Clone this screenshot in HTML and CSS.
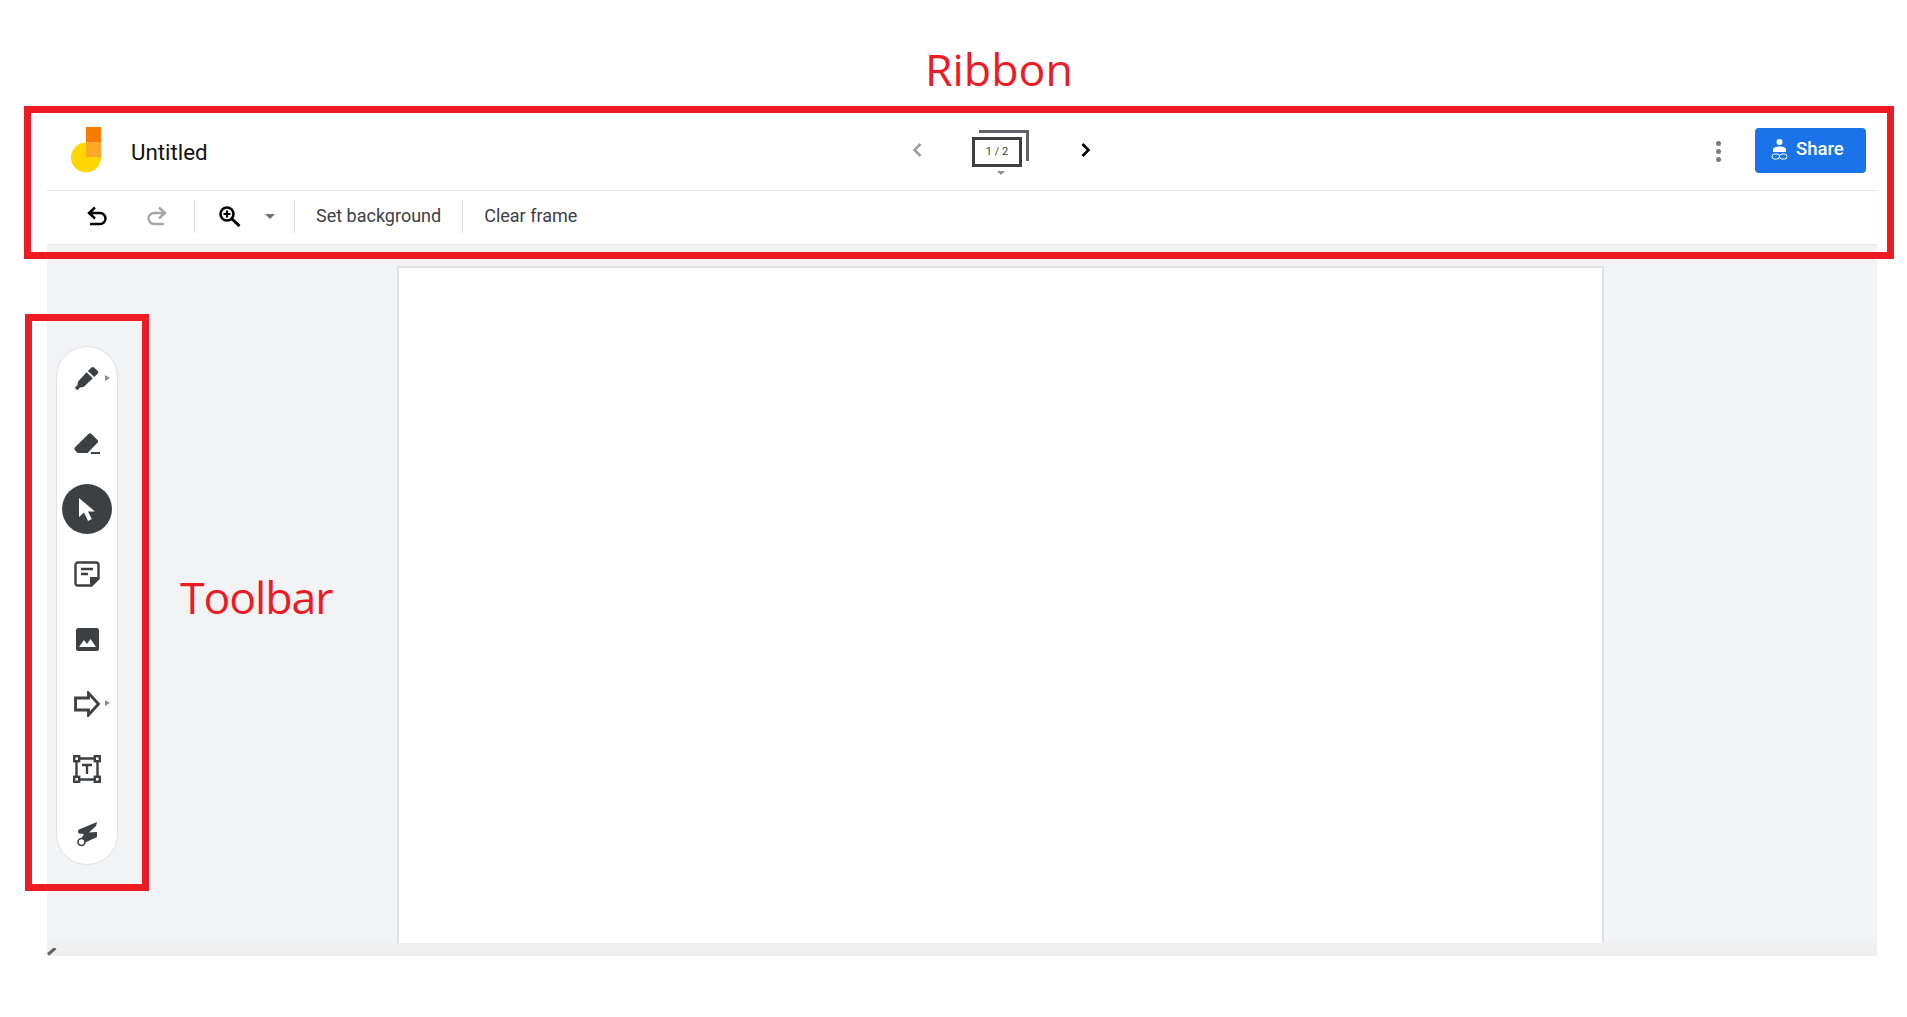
FILE: index.html
```html
<!DOCTYPE html>
<html>
<head>
	<title>Jamboard ribbon and toolbar</title>
	<link rel="stylesheet" href="styles.css">
</head>
<body>

<div class="app">
	<div class="top-row">
		<div class="doc">
			<svg class="logo" width="30" height="46" viewBox="0 0 30 46">
				<circle cx="15" cy="30.5" r="15" fill="#ffd600"/>
				<rect x="15" y="0" width="15" height="15" fill="#f57c00"/>
				<rect x="15" y="15" width="15" height="15" fill="#ffa726"/>
			</svg>
			<span class="doc-title">Untitled</span>
		</div>
		<div class="pager">
			<svg class="chev" width="10" height="14" viewBox="0 0 10 14"><path d="M8.5 1 2.5 7l6 6" fill="none" stroke="#9aa0a6" stroke-width="2.6"/></svg>
			<div class="frames">
				<div class="frame-back"></div>
				<div class="frame-front">1 / 2</div>
				<div class="frame-caret"></div>
			</div>
			<svg class="chev" width="10" height="14" viewBox="0 0 10 14"><path d="M1.5 1l6 6-6 6" fill="none" stroke="#000" stroke-width="2.6"/></svg>
		</div>
		<div class="actions">
			<div class="dots"><i></i><i></i><i></i></div>
			<button class="share">
				<svg width="17" height="21" viewBox="0 0 17 21">
					<circle cx="8.5" cy="3" r="3" fill="#fff"/>
					<path d="M2 13V10.500c0-2 3-3 6.500-3S15 8.500 15 10.500V13z" fill="#fff"/>
					<rect x="1" y="15" width="7.500" height="5" rx="2.500" fill="none" stroke="#fff"/>
					<rect x="8.500" y="15" width="7.500" height="5" rx="2.500" fill="none" stroke="#fff"/>
				</svg>
				Share
			</button>
		</div>
	</div>

	<div class="ribbon-row">
		<svg class="ic-undo" width="20" height="20" viewBox="0 0 20 20"><path d="M8 1.500 2 7l6 5.500M2.500 7H13a5.500 5.500 0 0 1 0 11H3" fill="none" stroke="#000" stroke-width="2.400"/></svg>
		<svg class="ic-redo" width="20" height="20" viewBox="0 0 20 20"><path d="M12 1.500 18 7l-6 5.500M17.500 7H7a5.500 5.500 0 0 0 0 11h10" fill="none" stroke="#a8a8a8" stroke-width="2.400"/></svg>
		<div class="sep sep-first"></div>
		<svg class="ic-zoom" width="22" height="21" viewBox="0 0 22 21"><circle cx="8" cy="8" r="6.500" fill="none" stroke="#000" stroke-width="2.600"/><path d="M13 13l7.500 7" stroke="#000" stroke-width="3"/><path d="M8 4.500v7M4.500 8h7" stroke="#000" stroke-width="2.200"/></svg>
		<div class="caret"></div>
		<div class="sep sep-second"></div>
		<span class="rib-btn">Set background</span>
		<div class="sep sep-third"></div>
		<span class="rib-btn">Clear frame</span>
	</div>

	<div class="workspace">
		<div class="tools">
			<div class="tool has-more">
				<svg width="26" height="26" viewBox="0 0 26 26" fill="#3c4043"><path d="M17.500 1.500c.8-.7 1.800-.7 2.500 0l3.800 3.500c.7.800.7 1.800 0 2.500l-3.600 3.600-6.300-6z"/><path d="M12.600 6.300l6.200 6-8.300 8c-.5.500-1 .7-1.600.8l-3 .5-1.800 2c-.5.500-1.200.5-1.800 0l-.7-.7c-.5-.6-.5-1.300 0-1.800l1.800-1.800.5-3c.1-.6.300-1.100.8-1.600z"/></svg>
			</div>
			<div class="tool">
				<svg width="26" height="22" viewBox="0 0 26 22" fill="#3c4043"><path d="M14.500 1c.9-.9 2.200-.9 3 0l6 6c.8.800.8 2 0 2.800L13.500 20H4.500c-.6 0-1-.2-1.400-.6L1 17.200c-.9-.9-.9-2.100 0-3z"/><rect x="17" y="19" width="9" height="2"/></svg>
			</div>
			<div class="tool tool-on">
				<div class="tool-disc">
					<svg width="18" height="24" viewBox="0 0 18 24" fill="#fff"><path d="M1 1v19l5-4.500L10 24l3.800-2-3.800-7.500h7z"/></svg>
				</div>
			</div>
			<div class="tool">
				<svg width="26" height="26" viewBox="0 0 26 26"><path d="M4 1.500h18A2.500 2.500 0 0 1 24.500 4v13.500l-7 7H4A2.500 2.500 0 0 1 1.500 22V4A2.500 2.500 0 0 1 4 1.500z" fill="none" stroke="#3c4043" stroke-width="2.400"/><path d="M7 8h12M7 13h7" stroke="#3c4043" stroke-width="2.400"/><path d="M16 25v-9h9z" fill="#3c4043"/></svg>
			</div>
			<div class="tool">
				<svg width="23" height="23" viewBox="0 0 23 23"><rect width="23" height="23" rx="2.500" fill="#3c4043"/><path d="M3 19l5-7 3 4 3.500-5L20 19z" fill="#fff"/></svg>
			</div>
			<div class="tool has-more">
				<svg width="26" height="26" viewBox="0 0 26 26"><path d="M1.500 7h13V2l10 11-10 11v-5h-13z" fill="none" stroke="#3c4043" stroke-width="2.800"/></svg>
			</div>
			<div class="tool">
				<svg width="28" height="28" viewBox="0 0 28 28" fill="none" stroke="#3c4043" stroke-width="2.400"><path d="M3.500 6v16M24.500 6v16M6 3.500h16M6 24.500h16"/><rect x="1.200" y="1.200" width="5" height="5"/><rect x="21.800" y="1.200" width="5" height="5"/><rect x="1.200" y="21.800" width="5" height="5"/><rect x="21.800" y="21.800" width="5" height="5"/><path d="M9 10h10M14 10v9"/></svg>
			</div>
			<div class="tool">
				<svg width="22" height="26" viewBox="0 0 22 26"><path d="M21 1 3 8.500C1.500 9.500 1.500 12 3 12.500l5 .5-3 5 1 5 15-7v-5l-8 .5 7-6.500z" fill="#3c4043"/><circle cx="5.500" cy="21" r="3.500" fill="#fff" stroke="#3c4043" stroke-width="1.600"/></svg>
			</div>
		</div>
		<div class="canvas"></div>
	</div>
	<div class="foot">
		<svg width="10" height="8" viewBox="0 0 10 8"><path d="M8.500 0 1 6.500" stroke="#5f6368" stroke-width="3"/></svg>
	</div>
</div>

<!-- the annotations drawn on top of the screenshot -->
<div class="note-box ribbon-box"></div>
<div class="note-box toolbar-box"></div>
<div class="note-label ribbon-label">Ribbon</div>
<div class="note-label toolbar-label">Toolbar</div>

</body>
</html>
```

FILE: styles.css
```css
body {
	margin:0;
	background-color:#fff;
	font-family:"Roboto", "Liberation Sans", sans-serif;
	color:#3c4043;
}

.app {
	margin:113px 0 0 47px;
	width:1830px;
}

/* first row: logo, pager, share */
.top-row {
	display:grid;
	grid-template-columns:864px 180px 1fr;
	height:77px;
	border-bottom:1px solid #e3e4e6;
}
.doc {
	display:flex;
	align-items:flex-start;
	padding:14px 0 0 24px;
}
.doc-title {
	margin:14px 0 0 30px;
	font-size:22.300px;
	line-height:22px;
	color:#111;
}
.pager {
	display:flex;
	justify-content:space-between;
	align-items:flex-start;
	padding:30px 0 0 1px;
}
.frames {
	position:relative;
	width:56px;
	height:46px;
	margin:-13px 3px 0 0;
}
.frame-back {
	position:absolute;
	left:7px;
	top:0;
	width:47px;
	height:28px;
	border-top:3px solid #5f6368;
	border-right:3px solid #5f6368;
}
.frame-front {
	position:absolute;
	left:0;
	top:7px;
	width:44px;
	height:24px;
	border:3px solid #3c4043;
	background-color:#fff;
	font-size:11px;
	line-height:24px;
	text-align:center;
}
.frame-caret {
	position:absolute;
	left:25px;
	top:41px;
	border-left:4px solid transparent;
	border-right:4px solid transparent;
	border-top:4px solid #8a8d91;
}
.actions {
	display:flex;
	justify-content:flex-end;
	align-items:flex-start;
	padding:15px 11px 0 0;
}
.dots {
	display:flex;
	flex-direction:column;
	gap:3px;
	margin:13px 34px 0 0;
}
.dots i {
	display:block;
	width:5px;
	height:5px;
	border-radius:50%;
	background-color:#7a7a7a;
}
.share {
	display:flex;
	align-items:center;
	gap:8px;
	width:111px;
	height:45px;
	padding:0 0 3px 16px;
	border:0;
	border-radius:4px;
	background-color:#1a73e8;
	color:#fff;
	font-family:"Roboto", sans-serif;
	font-size:18.500px;
	font-weight:500;
}

/* second row: undo, redo, zoom, text buttons */
.ribbon-row {
	display:flex;
	align-items:center;
	box-sizing:border-box;
	height:54px;
	padding-bottom:3px;
	border-bottom:1px solid #e8eaed;
}
.ic-undo { margin-left:40px; }
.ic-redo { margin-left:40px; }
.ic-zoom { margin-left:24px; }
.caret {
	margin-left:24px;
	border-left:5px solid transparent;
	border-right:5px solid transparent;
	border-top:5px solid #6f7276;
}
.sep {
	width:1px;
	height:33px;
	margin-top:1px;
	background-color:#dadce0;
}
.sep-first { margin-left:27px; }
.sep-second { margin-left:19px; }
.sep-third { margin-left:21px; }
.rib-btn {
	margin:-1px 0 0 21px;
	font-size:18px;
	line-height:20px;
}

/* work area */
.workspace {
	display:flex;
	align-items:flex-start;
	height:698px;
	padding-left:9px;
	background-color:#f1f3f4;
}
.tools {
	display:flex;
	flex-direction:column;
	gap:9px;
	box-sizing:border-box;
	width:62px;
	height:519px;
	margin-top:101px;
	padding-top:4px;
	border:1px solid #dfe1e5;
	border-radius:31px;
	background-color:#fff;
}
.tool {
	position:relative;
	display:flex;
	justify-content:center;
	align-items:center;
	height:56px;
}
.has-more:after {
	content:"";
	position:absolute;
	right:7px;
	top:24px;
	border-top:3.500px solid transparent;
	border-bottom:3.500px solid transparent;
	border-left:5px solid #8a8d98;
}
.tool-disc {
	display:flex;
	justify-content:center;
	align-items:center;
	width:50px;
	height:50px;
	border-radius:50%;
	background-color:#3c4043;
}
.canvas {
	box-sizing:border-box;
	width:1207px;
	height:677px;
	margin:21px 0 0 279px;
	border:2px solid #dfe0e3;
	border-bottom:0;
	background-color:#fff;
}
.foot {
	height:13px;
	overflow:hidden;
	background-color:#efefef;
}
.foot svg {
	display:block;
	margin-top:5px;
}

/* annotations */
.note-box {
	position:absolute;
	box-sizing:border-box;
	border:7px solid #ed1c24;
}
.ribbon-box {
	left:24px;
	top:106px;
	width:1870px;
	height:153px;
}
.toolbar-box {
	left:25px;
	top:314px;
	width:124px;
	height:577px;
}
.note-label {
	position:absolute;
	font-family:"Open Sans", sans-serif;
	font-size:44.700px;
	line-height:60px;
	color:#ed1c24;
}
.ribbon-label {
	left:925px;
	top:39px;
}
.toolbar-label {
	left:180px;
	top:567px;
	letter-spacing:-1.100px;
}
```
